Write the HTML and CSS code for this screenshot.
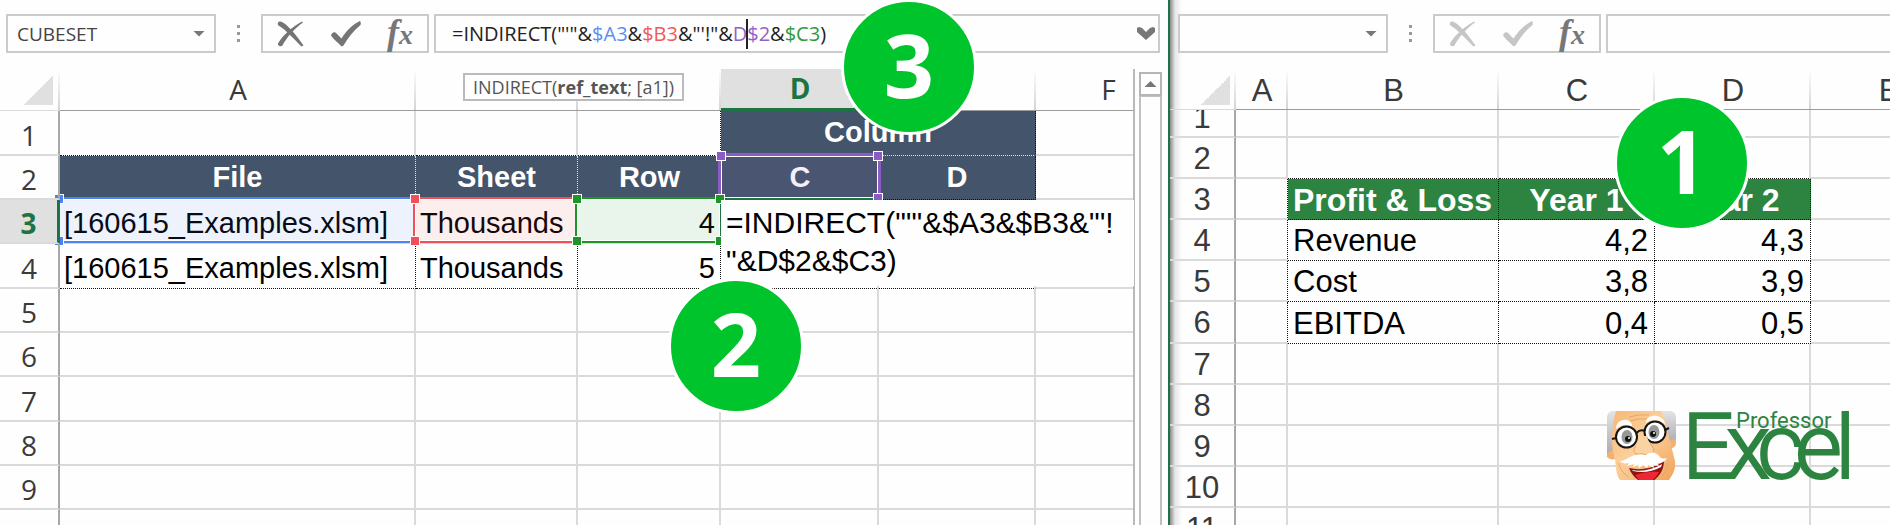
FILE: index.html
```html
<!DOCTYPE html>
<html lang="en">
<head>
<meta charset="utf-8">
<title>INDIRECT with external workbooks</title>
<link rel="stylesheet" href="styles.css">
</head>
<body>
<svg class="defs" aria-hidden="true">
  <symbol id="cancel" viewBox="0 0 28 28"><path d="M3 1.500C8 1 20 16 26.500 25.500L24.500 26.500C18 20 8 9 1.500 5.500C0 4 1 1.500 3 1.500Z"/><path d="M26 2.500C19 7 9 18 5.500 25.500C4 27 .500 26 1 23.500C6 15 16 6 25 1.500Z"/></symbol>
  <symbol id="enter" viewBox="0 0 30 28"><path d="M0 15.500C1 12 4 11 6 14L10.500 18.500C15 11 21 5 29 1C30 2 30 4 29.500 5C22 11 17 18 12.500 25.500L10.500 26.500C8 23 3 20 0 15.500Z"/></symbol>
</svg>
<main class="screen">
  <section class="pane pane-left">
    <div class="bar">
      <div class="namebox"><input type="text" aria-label="Name box" value="CUBESET"><button type="button" class="drop" aria-label="Open name list"></button></div>
      <span class="grip"><i></i><i></i><i></i></span>
      <div class="tools">
        <button type="button" aria-label="Cancel"><svg width="28" height="28"><use href="#cancel"/></svg></button>
        <button type="button" aria-label="Enter"><svg width="30" height="28"><use href="#enter"/></svg></button>
        <button type="button" class="fx" aria-label="Insert function"><span>f</span><small>x</small></button>
      </div>
      <div class="formula">
        <div class="formula-text" role="textbox" aria-label="Formula" contenteditable="true" spellcheck="false">=INDIRECT("'"&amp;<span class="ref-a">$A3</span>&amp;<span class="ref-b">$B3</span>&amp;"'!"&amp;<span class="ref-d">D<i class="caret"></i>$2</span>&amp;<span class="ref-c">$C3</span>)</div>
        <button type="button" class="expand" aria-label="Expand formula bar"><svg width="18" height="13" viewBox="0 0 18 13"><path d="M0 1L2 0L5 1L9 5L13 1L16 0L18 1V5L9 13L0 5Z"/></svg></button>
      </div>
    </div>
    <div class="work">
      <div class="sheet">
        <table class="grid">
          <colgroup><col class="w-num"><col class="w-file"><col class="w-sheet"><col class="w-row"><col class="w-c"><col class="w-d"><col></colgroup>
          <thead><tr><th class="corner"></th><th>A</th><th>B</th><th>C</th><th class="current">D</th><th>E</th><th class="plain-end">F</th></tr></thead>
          <tbody>
            <tr><th>1</th><td class="b-dot"></td><td class="b-dot"></td><td class="b-dot r-dot"></td><td colspan="2" class="navy r-dot b-light">Column</td><td></td></tr>
            <tr><th>2</th><td class="navy r-light">File</td><td class="navy r-light">Sheet</td><td class="navy">Row</td><td class="navy">C<span class="range purple"><b class="tl"></b><b class="tr"></b><b class="br"></b></span></td><td class="navy r-dot b-dot">D</td><td></td></tr>
            <tr><th class="current">3</th><td class="data">[160615_Examples.xlsm]<span class="range blue"><b class="tl"></b><b class="bl"></b></span></td><td class="data">Thousands<span class="range red"><b class="tl"></b><b class="bl"></b></span></td><td class="data num r-dot">4<span class="range green"><b class="tl"></b><b class="tr"></b><b class="bl"></b><b class="br"></b></span></td><td class="data"><textarea class="editor" aria-label="Cell D3" rows="2" spellcheck="false">=INDIRECT("'"&amp;$A3&amp;$B3&amp;"'!
"&amp;D$2&amp;$C3)</textarea></td><td></td><td></td></tr>
            <tr><th>4</th><td class="data r-dot b-dot">[160615_Examples.xlsm]</td><td class="data r-dot b-dot">Thousands</td><td class="data num r-dot b-dot">5</td><td class="b-dot"></td><td class="b-dot"></td><td></td></tr>
            <tr><th>5</th><td></td><td></td><td></td><td></td><td></td><td></td></tr>
            <tr><th>6</th><td></td><td></td><td></td><td></td><td></td><td></td></tr>
            <tr><th>7</th><td></td><td></td><td></td><td></td><td></td><td></td></tr>
            <tr><th>8</th><td></td><td></td><td></td><td></td><td></td><td></td></tr>
            <tr><th>9</th><td></td><td></td><td></td><td></td><td></td><td></td></tr>
            <tr><th>10</th><td></td><td></td><td></td><td></td><td></td><td></td></tr>
          </tbody>
        </table>
        <div class="hint">INDIRECT(<strong>ref_text</strong>; [a1])</div>
      </div>
      <div class="scroll"><button type="button" aria-label="Scroll up"></button><div class="track"></div></div>
    </div>
  </section>

  <section class="pane pane-right">
    <div class="bar">
      <div class="namebox"><input type="text" aria-label="Name box"><button type="button" class="drop" aria-label="Open name list"></button></div>
      <span class="grip"><i></i><i></i><i></i></span>
      <div class="tools idle">
        <button type="button" aria-label="Cancel"><svg width="28" height="28"><use href="#cancel"/></svg></button>
        <button type="button" aria-label="Enter"><svg width="30" height="28"><use href="#enter"/></svg></button>
        <button type="button" class="fx" aria-label="Insert function"><span>f</span><small>x</small></button>
      </div>
      <div class="formula"><input type="text" aria-label="Formula"></div>
    </div>
    <div class="work">
      <table class="grid">
        <colgroup><col class="w-num2"><col class="w-a2"><col class="w-b2"><col class="w-year"><col class="w-year"><col class="w-year"></colgroup>
        <thead><tr><th class="corner"></th><th>A</th><th>B</th><th>C</th><th>D</th><th>E</th></tr></thead>
        <tbody>
          <tr><th><div class="cut"><span>1</span></div></th><td></td><td></td><td></td><td></td><td></td></tr>
          <tr><th>2</th><td></td><td class="b-dot"></td><td class="b-dot"></td><td class="b-dot"></td><td></td></tr>
          <tr><th>3</th><td class="r-dot"></td><td class="leaf r-dot b-dot start">Profit &amp; Loss</td><td class="leaf r-dot b-dot">Year 1</td><td class="leaf r-dot b-dot">Year 2</td><td></td></tr>
          <tr><th>4</th><td class="r-dot"></td><td class="data r-dot b-dot">Revenue</td><td class="data num r-dot b-dot">4,2</td><td class="data num r-dot b-dot">4,3</td><td></td></tr>
          <tr><th>5</th><td class="r-dot"></td><td class="data r-dot b-dot">Cost</td><td class="data num r-dot b-dot">3,8</td><td class="data num r-dot b-dot">3,9</td><td></td></tr>
          <tr><th>6</th><td class="r-dot"></td><td class="data r-dot b-dot">EBITDA</td><td class="data num r-dot b-dot">0,4</td><td class="data num r-dot b-dot">0,5</td><td></td></tr>
          <tr><th>7</th><td></td><td></td><td></td><td></td><td></td></tr>
          <tr><th>8</th><td></td><td></td><td></td><td></td><td></td></tr>
          <tr><th>9</th><td></td><td></td><td></td><td></td><td></td></tr>
          <tr><th>10</th><td></td><td></td><td></td><td></td><td></td></tr>
          <tr><th>11</th><td></td><td></td><td></td><td></td><td></td></tr>
        </tbody>
      </table>
    </div>
  </section>

  <div class="badge one">1</div>
  <div class="badge two">2</div>
  <div class="badge three">3</div>

  <svg class="logo" width="245" height="72" viewBox="0 0 245 72" role="img" aria-label="Professor Excel">
    <defs>
      <clipPath id="tile"><rect width="69" height="69" rx="6"/></clipPath>
      <linearGradient id="skin" x1="0" x2="1" y1="0" y2="1"><stop offset="0" stop-color="#f6b878"/><stop offset=".45" stop-color="#fcd09a"/><stop offset="1" stop-color="#f0a35c"/></linearGradient>
      <linearGradient id="hair" x1="0" x2="0" y1="0" y2="1"><stop offset="0" stop-color="#e4e4e6"/><stop offset="1" stop-color="#aaaab0"/></linearGradient>
    </defs>
    <g clip-path="url(#tile)">
      <path fill="url(#hair)" d="M0 0H12L8 42L0 44Z"/>
      <path fill="url(#hair)" d="M54 0H69V29L62 32Z"/>
      <path fill="#f3b070" d="M7 39C2 39 0 42 0 46C2 48 5 49 8 48ZM63 29C67 27 69 28 69 31C69 35 67 37 64 37Z"/>
      <path fill="url(#skin)" d="M9 0H54C58 6 60 16 61 22C64 34 66 42 68 50C69 58 66 63 62 69H13C9 64 9 56 8 48C6 40 4 33 5 22C6 14 7 6 9 0Z"/>
      <path fill="none" stroke="#eba566" d="M22 6Q31 3 42 4M23 10Q31 7 40 8M11 52Q13 60 21 66M61 51Q60 60 55 66"/>
      <path fill="#fff" d="M9 18C9 12 14 8 20 9C23 10 26 13 25 16C20 12 14 14 9 18ZM39 12C39 6 45 4 50 5C54 6 58 9 58 13C53 9 45 7 39 12Z"/>
      <circle cx="19.500" cy="26" r="10.500" fill="#fff" stroke="#151515" stroke-width="2"/>
      <circle cx="48" cy="21" r="10.500" fill="#fff" stroke="#151515" stroke-width="2"/>
      <path fill="none" stroke="#151515" stroke-width="2" d="M29.500 22Q33 18 38 20M9 27L5 28M58 19L62 17"/>
      <ellipse cx="20" cy="26" rx="5.500" ry="7" fill="#96989a"/><circle cx="21" cy="28" r="3" fill="#111"/><circle cx="22" cy="27" r="1" fill="#fff"/>
      <ellipse cx="47" cy="21" rx="5.500" ry="7" fill="#96989a"/><circle cx="46" cy="23" r="3" fill="#111"/><circle cx="47" cy="22" r="1" fill="#fff"/>
      <path fill="#fbd3a2" d="M33 25C32 32 28 36 26 40C27 44 32 45 35 43C39 45 45 43 47 39C45 34 41 31 40 25"/>
      <path fill="none" stroke="#e5a068" d="M29 35C26 38 26 42 30 43C32 44 34 42 36 43C40 45 45 43 47 39C46 36 44 34 43 32"/>
      <path fill="#8c1512" d="M22 57C34 60 48 57 57 50C57 59 52 66 45 71H34C28 67 24 63 22 57Z"/>
      <path fill="#fff" d="M25 59C36 61 47 58 55 53L54 56C45 61 35 62 26 60Z"/>
      <path fill="#ee2633" d="M28 64C36 61 47 60 52 61C49 66 46 70 42 71H34Z"/>
      <path fill="#fff" d="M13 50C20 50 22 44 30 44C34 43 37 44 39 44C43 40 49 41 52 45C54 48 57 48 60 47C58 51 53 53 50 52L52 55L46 54L47 57L41 54L40 57L36 54L32 57L31 54L26 56L27 53L20 55L22 52C18 53 15 52 13 50Z"/>
    </g>
    <text class="word" y="67" x="75 119 150 188 228">Excel</text>
    <text class="prof" x="129" y="17">Professor</text>
  </svg>
</main>
</body>
</html>
```
FILE: styles.css
```css
* { box-sizing: border-box; }
body { margin: 0; background: #fff; }
button, input, textarea { margin: 0; padding: 0; border: 0; background: none; font: inherit; color: inherit; outline: 0; }
.defs { position: absolute; width: 0; height: 0; }

.screen { position: relative; display: grid; grid-template-columns: 13fr 8fr; height: 100vh; overflow: hidden; }
.pane { min-width: 0; overflow: hidden; background: #fefefe; }
.pane-left { border-right: 2px solid #1f7145; font: 28px "Open Sans", sans-serif; }
.pane-right { font: 31px "Liberation Sans", Arial, sans-serif; background: linear-gradient(90deg, #8a8a8a, #e6e6e6 5px, #fefefe 12px); }

/* formula bar */
.bar { display: flex; align-items: center; height: 69px; padding: 14px 8px 16px 6px; font: 20px "Open Sans", sans-serif; color: #222; }
.pane-right .bar { padding-left: 8px; padding-right: 0; }
.namebox, .tools, .formula { display: flex; align-items: center; height: 39px; border: 2px solid #cbcbcb; background: #fefefe; }
.namebox { width: 210px; padding: 0 9px; }
.namebox input { flex: 1; min-width: 0; font-size: 19px; color: #444; }
.drop { width: 12px; height: 6px; background: #777; clip-path: polygon(0 0, 100% 0, 50% 100%); }
.grip { display: flex; flex-direction: column; align-items: center; gap: 4px; width: 45px; }
.grip i { width: 3px; height: 3px; background: #999; }
.tools { justify-content: space-between; width: 168px; padding: 0 14px; margin-right: 5px; fill: #757575; }
.tools button { display: flex; }
.idle { fill: #c6c6c6; }
.fx { align-items: baseline; font: italic bold 36px/36px "Liberation Serif", serif; color: #777; }
.fx small { font-size: 28px; }
.formula { flex: 1; padding: 0 3px 0 16px; }
.pane-right .formula { border-right: 0; }
.formula-text { flex: 1; outline: 0; white-space: nowrap; }
.caret { display: inline-block; width: 2px; height: 30px; margin: -8px -1px; background: #222; }
.expand { display: flex; fill: #777; }
.ref-a { color: #5b8ff0; }
.ref-b { color: #f0585c; }
.ref-c { color: #2f9a3c; }
.ref-d { color: #8e62c8; }

/* worksheet */
.work { display: flex; }
.sheet { position: relative; flex: 1; border-right: 2px solid #b9b9b9; }
.grid { width: 100%; table-layout: fixed; border-collapse: separate; border-spacing: 0; }
.pane-right .grid { width: 797px; flex: none; }
.w-num { width: 60px; }
.w-file { width: 356px; }
.w-sheet { width: 162px; }
.w-row { width: 143px; }
.w-c { width: 158px; }
.w-d { width: 157px; }
.w-num2 { width: 66px; }
.w-a2 { width: 52px; }
.w-b2 { width: 211px; }
.w-year { width: 156px; }
.grid th, .grid td { height: 44px; padding: 0; border: 0 solid #dadada; border-width: 0 2px 2px 0; line-height: 36px; text-align: center; white-space: nowrap; }
.grid th { font-weight: 400; color: #3a3a3a; }
.grid tbody tr:nth-child(3n+1) > * { height: 45px; }
.grid thead th { height: 42px; padding-bottom: 2px; border-right: 0; border-bottom: 1px solid #9c9c9c; background: linear-gradient(#fff0, #d4d4d4) right / 2px 100% no-repeat; }
.grid thead .plain-end { padding-left: 48px; background: none; }
.grid thead .corner { border-bottom-color: #dadada; background: linear-gradient(135deg, transparent 50%, #e0e0e0 50%) 24px 7px / 29px 29px no-repeat, linear-gradient(#fff0, #d4d4d4) right / 2px 100% no-repeat; }
.grid tbody th { position: relative; z-index: 6; border-right-color: #a8a8a8; padding-top: 4px; }
.grid tbody td { position: relative; padding-top: 4px; font: 29px/36px "Liberation Sans", Arial, sans-serif; color: #000; }
.grid .current { background: #e0e0e0; color: #1c7443; font-weight: 700; }
.grid thead .current { border-bottom: 3px solid #1c7443; }
.grid tbody .current { border-right: 3px solid #1c7443; }
.pane-left .grid td:last-child { border-right: 0; }
.grid tbody .navy { padding-top: 0; padding-bottom: 2px; background: #44546a; color: #fff; font-weight: 700; border-width: 0; }
.grid .leaf { background: #2c8440; color: #fff; font-weight: 700; }
.grid .data { text-align: left; padding-left: 4px; }
.grid .start { text-align: left; padding-left: 5px; }
.grid .num { text-align: right; padding-right: 5px; }
.grid .r-dot, .grid tbody .navy.r-dot { border-right: 1px dotted #111; }
.grid .b-dot, .grid tbody .navy.b-dot { border-bottom: 1px dotted #111; }
.grid tbody .r-light { border-right: 1px dotted #e4e0d4; }
.grid tbody .b-light { border-bottom: 1px dotted #e4e0d4; }

.pane-right .grid th, .pane-right .grid td { height: 41px; line-height: 36px; }
.pane-right .grid thead th { padding-top: 4px; padding-bottom: 0; }
.pane-right .grid tbody th, .pane-right .grid tbody td { padding-top: 2px; }
.pane-right .grid tbody td { font-size: 31px; }
.pane-right .grid tbody .leaf { font-size: 32px; }
.pane-right .grid tbody tr:nth-child(n) > * { height: 41px; }
.pane-right .grid tbody tr:nth-child(1) > * { height: 28px; padding-top: 0; }
.pane-right .grid tbody tr:nth-child(6) > * { height: 42px; }
.pane-right .grid .data { padding-left: 5px; }
.pane-right .grid .num { padding-right: 6px; }
.pane-right .grid .corner { background-position: 31px 7px, right; }
.cut { display: flex; align-items: flex-end; justify-content: center; height: 26px; overflow: hidden; }

/* coloured outlines of the referenced ranges */
.range { position: absolute; inset: -3px -2px -1px -3px; border: 2px solid; box-shadow: inset 0 0 0 1px #fff; }
.range b { position: absolute; width: 10px; height: 10px; border: 1px solid #fff; background: currentColor; }
.tl { top: -5px; left: -5px; }
.tr { top: -5px; right: -5px; }
.bl { bottom: -5px; left: -5px; }
.br { bottom: -5px; right: -5px; }
.blue { z-index: 1; color: #4f81f0; background: #4f81f018; }
.red { z-index: 2; color: #f0505a; background: #f0505a18; }
.purple { z-index: 3; color: #8a5cc4; background: #8a5cc418; border-width: 3px; border-bottom-color: #1c7443; }
.green { z-index: 4; color: #1f9428; background: #1f942818; border-right-color: #1c7443; }
.editor { position: absolute; z-index: 5; top: 0; left: 0; width: 413px; height: 86px; padding: 4px 0 0 5px; background: #fefefe; font-size: 30px; line-height: 38px; resize: none; overflow: hidden; white-space: pre; }

.hint { position: absolute; z-index: 7; top: 4px; left: 463px; padding: 0 8px; border: 2px solid #bbb; background: #fefefe; font-size: 18px; line-height: 24px; color: #555; }

.scroll { display: flex; flex-direction: column; width: 23px; margin: 3px 6px 0 4px; }
.scroll button { display: grid; place-items: center; height: 24px; border: 2px solid #b5b5b5; }
.scroll button::before { content: ""; width: 12px; height: 6px; background: #777; clip-path: polygon(50% 0, 100% 100%, 0 100%); }
.track { flex: 1; border: 2px solid #c0c0c0; border-width: 1px 2px 0; }

/* step markers and logo */
.badge { position: absolute; z-index: 10; display: grid; place-items: center; width: 136px; height: 136px; padding-bottom: 6px; border: 3px solid #fff; border-radius: 50%; background: #00c42b; color: #fff; font: bold 88px/88px "Open Sans", sans-serif; }
.one { left: 1614px; top: 95px; }
.two { left: 668px; top: 278px; }
.three { left: 841px; top: -1px; }
.logo { position: absolute; z-index: 10; left: 1607px; top: 411px; fill: #2c8440; }
.word { font: 300 91px Roboto, sans-serif; stroke: #2c8440; stroke-width: 2px; }
.prof { font: 400 22px Roboto, sans-serif; }
```
